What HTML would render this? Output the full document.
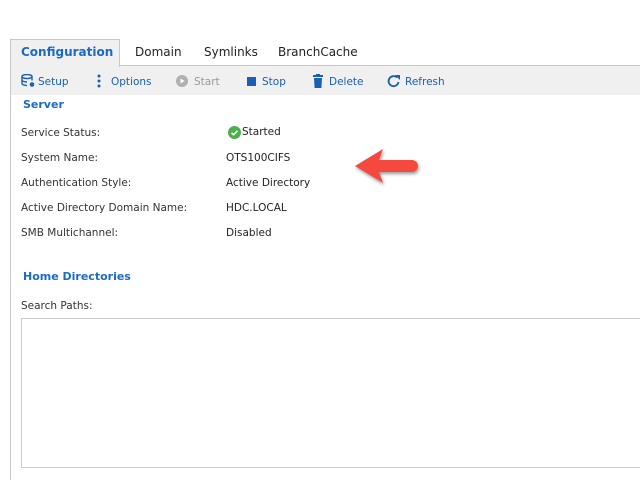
<!DOCTYPE html>
<html><head><style>
*{margin:0;padding:0;box-sizing:border-box}
body{width:640px;height:480px;background:#fff;font-family:"DejaVu Sans","Liberation Sans",sans-serif;position:relative;overflow:hidden;color:#333;font-size:11px}
.abs{position:absolute;white-space:nowrap}
.tab{position:absolute;top:39px;height:27px;font-size:12px;line-height:27px;color:#222}
.tb{position:absolute;top:75px;font-size:10.5px;color:#1a5fb4;line-height:14px}
.lbl{position:absolute;left:21px;font-size:10.5px;color:#333}
.val{position:absolute;left:226px;font-size:10.5px;color:#222}
.h{position:absolute;font-weight:bold;color:#1a6bc7;font-size:11px}
</style></head><body>
<div class="abs" style="left:10px;top:65px;width:630px;height:1px;background:#c8c8c8"></div>
<div class="abs" style="left:10px;top:66px;width:630px;height:29px;background:#f0f0f0"></div>
<div class="abs" style="left:10px;top:39px;width:1px;height:441px;background:#c8c8c8"></div>
<div class="abs" style="left:10px;top:39px;width:110px;height:28px;background:#f0f0f0;border:1px solid #c8c8c8;border-bottom:none"></div>
<div class="tab" style="left:21px;color:#1a6bc7;font-weight:bold;">Configuration</div>
<div class="tab" style="left:135px">Domain</div>
<div class="tab" style="left:204px">Symlinks</div>
<div class="tab" style="left:278px">BranchCache</div>

<svg class="abs" style="left:21px;top:74px" width="14" height="14" viewBox="0 0 14 14"><ellipse cx="6" cy="2.5" rx="5" ry="2" fill="none" stroke="#1a5fb4" stroke-width="1.4"/><path d="M1 2.5v7c0 1.1 2.2 2 5 2M11 2.5v4M1 6c0 1.1 2.2 2 5 2" fill="none" stroke="#1a5fb4" stroke-width="1.4"/><circle cx="11" cy="10.5" r="2.3" fill="#1a5fb4"/></svg>
<div class="tb" style="left:38px">Setup</div>
<svg class="abs" style="left:96px;top:74px" width="6" height="14"><circle cx="3" cy="2" r="1.5" fill="#1a5fb4"/><circle cx="3" cy="7" r="1.5" fill="#1a5fb4"/><circle cx="3" cy="12" r="1.5" fill="#1a5fb4"/></svg>
<div class="tb" style="left:111px">Options</div>
<svg class="abs" style="left:176px;top:75px" width="12" height="12"><circle cx="6" cy="6" r="6" fill="#b0b0b0"/><path d="M4.5 3.5L8.5 6 4.5 8.5z" fill="#fff"/></svg>
<div class="tb" style="left:194px;color:#999">Start</div>
<div class="abs" style="left:247px;top:77px;width:9px;height:9px;background:#1a5fb4"></div>
<div class="tb" style="left:262px">Stop</div>
<svg class="abs" style="left:313px;top:74px" width="10" height="14"><rect x="0" y="1" width="10" height="2" fill="#1a5fb4"/><rect x="3" y="0" width="4" height="2" fill="#1a5fb4"/><path d="M1 4h8l-.6 10H1.6z" fill="#1a5fb4"/></svg>
<div class="tb" style="left:329px">Delete</div>
<svg class="abs" style="left:387px;top:74px" width="14" height="14" viewBox="0 0 14 14"><path d="M11.5 8A5 5 0 1 1 10 3.5" fill="none" stroke="#1a5fb4" stroke-width="1.8"/><path d="M8 1h5v5z" fill="#1a5fb4"/></svg>
<div class="tb" style="left:405px">Refresh</div>

<div class="h" style="left:23px;top:98px">Server</div>
<div class="lbl" style="top:127px">Service Status:</div>
<div class="lbl" style="top:152px">System Name:</div>
<div class="lbl" style="top:177px">Authentication Style:</div>
<div class="lbl" style="top:202px">Active Directory Domain Name:</div>
<div class="lbl" style="top:227px">SMB Multichannel:</div>
<svg class="abs" style="left:228px;top:126px" width="13" height="13"><circle cx="6.5" cy="6.5" r="6.5" fill="#4caf50"/><path d="M3.5 6.8l2 2 4-4" fill="none" stroke="#fff" stroke-width="1.6"/></svg>
<div class="val" style="left:242px;top:126px">Started</div>
<div class="val" style="top:152px">OTS100CIFS</div>
<div class="val" style="top:177px">Active Directory</div>
<div class="val" style="top:202px">HDC.LOCAL</div>
<div class="val" style="top:227px">Disabled</div>

<svg class="abs" style="left:350px;top:145px" width="75" height="45"><defs><filter id="s"><feDropShadow dx="1" dy="2" stdDeviation="1.5" flood-opacity="0.4"/></filter></defs><path d="M5 21L33 4 29 15H62a6 6 0 0 1 0 12H29l4 11z" fill="#f5483f" filter="url(#s)"/></svg>

<div class="h" style="left:23px;top:270px">Home Directories</div>
<div class="lbl" style="top:300px">Search Paths:</div>
<div class="abs" style="left:21px;top:318px;width:630px;height:150px;border:1px solid #ccc"></div>
</body></html>
